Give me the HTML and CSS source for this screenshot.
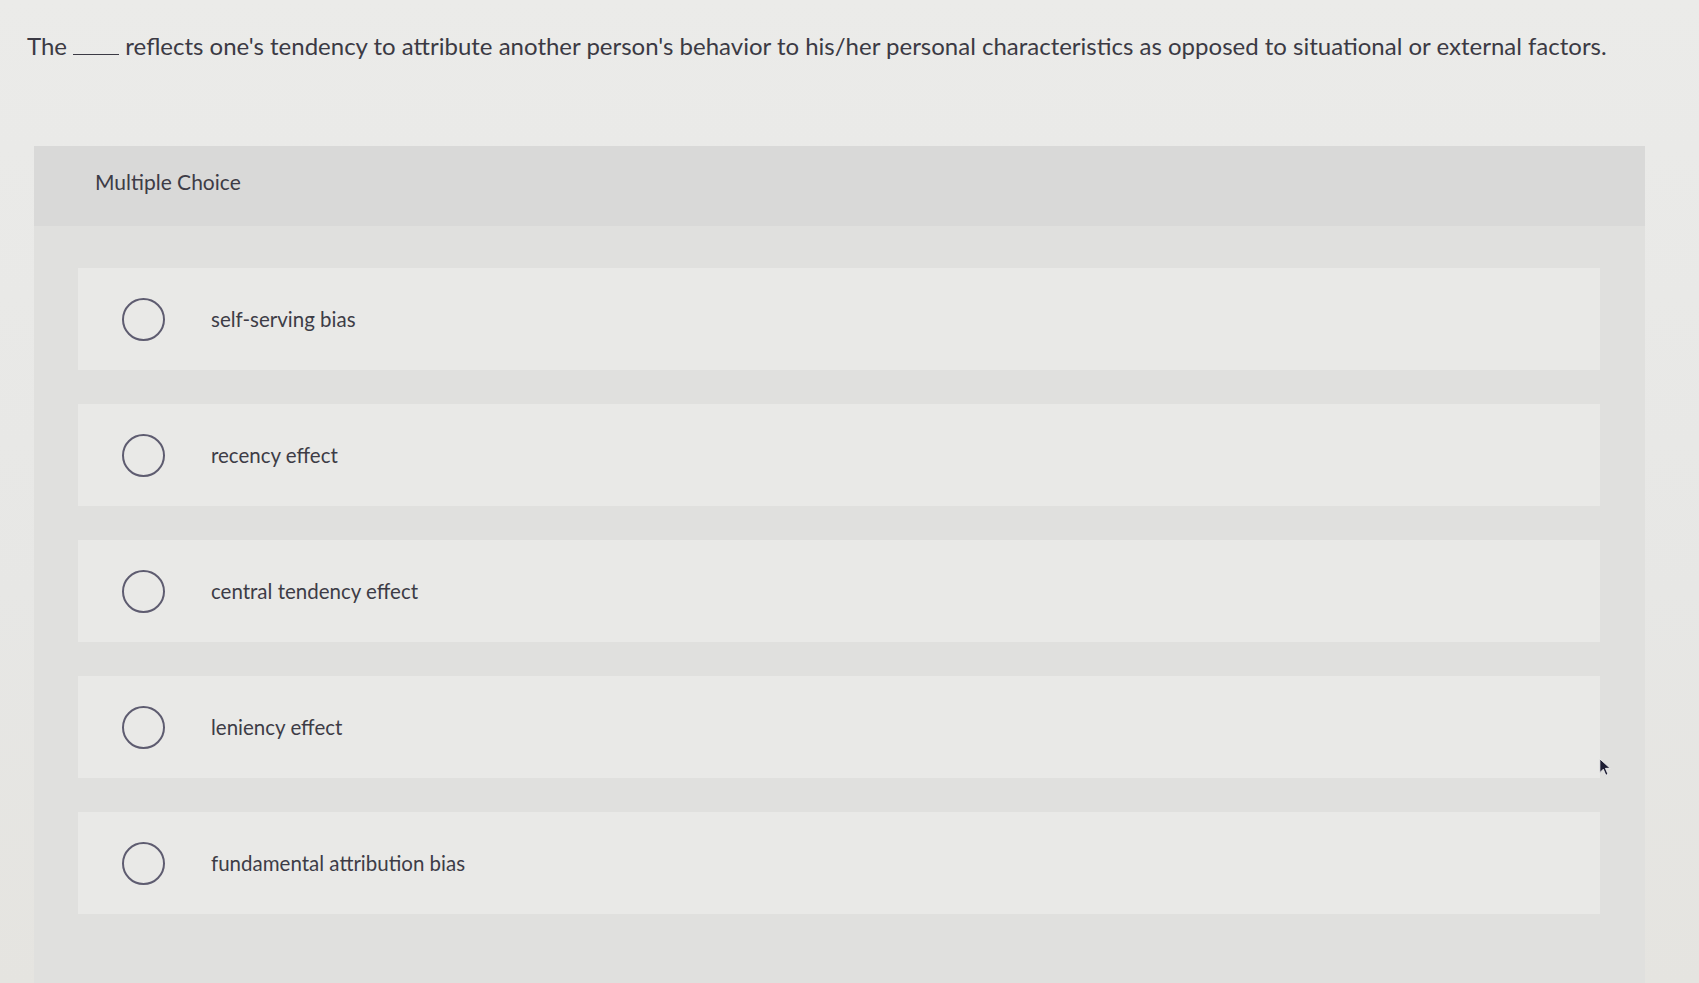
FILE: index.html
```html
<!DOCTYPE html>
<html>
<head>
<meta charset="utf-8">
<link rel="stylesheet" href="styles.css">
</head>
<body>
<div class="page">
  <p class="question">The <span class="blank"></span> reflects one's tendency to attribute another person's behavior to his/her personal characteristics as opposed to situational or external factors.</p>
  <section class="card">
    <header class="card-head">Multiple Choice</header>
    <div class="options">
      <label class="option"><span class="radio"></span><span class="opt-text">self-serving bias</span></label>
      <label class="option"><span class="radio"></span><span class="opt-text">recency effect</span></label>
      <label class="option"><span class="radio"></span><span class="opt-text">central tendency effect</span></label>
      <label class="option"><span class="radio"></span><span class="opt-text">leniency effect</span></label>
      <label class="option"><span class="radio"></span><span class="opt-text">fundamental attribution bias</span></label>
    </div>
  </section>
  <svg class="cursor" width="12" height="19" viewBox="0 0 14 22"><path d="M1 1 L1 17 L5 13 L8 20 L10.5 19 L7.5 12 L13 12 Z" fill="#1d1d33" stroke="#f2f2f2" stroke-width="1"/></svg>
</div>
</body>
</html>
```
FILE: styles.css
```css
html, body {
  margin: 0;
  padding: 0;
}
body {
  background: #e8e8e6;
  font-family: Lato, "Open Sans", "Liberation Sans", sans-serif;
  color: #3b3a44;
  overflow: hidden;
}
.page {
  position: relative;
  width: 1699px;
  height: 983px;
  overflow: hidden;
  background: linear-gradient(180deg, #ebebe9 0%, #e7e7e5 60%, #e5e4e0 100%);
}
.question {
  margin: 0;
  padding: 31px 0 0 27px;
  font-size: 24px;
  line-height: 30px;
  white-space: nowrap;
}
.blank {
  display: inline-block;
  width: 46px;
  border-bottom: 1.5px solid #3b3a44;
  vertical-align: baseline;
}
.card {
  margin: 85px 0 0 34px;
  width: 1611px;
  height: 900px;
  background: #e0e0de;
}
.card-head {
  height: 80px;
  box-sizing: border-box;
  padding: 22px 0 0 61px;
  background: #d9d9d8;
  font-size: 21px;
  line-height: 28px;
  color: #3d3c46;
}
.options {
  display: flex;
  flex-direction: column;
  gap: 34px;
  padding: 42px 45px 0 44px;
}
.option {
  display: flex;
  align-items: center;
  height: 102px;
  padding-left: 44px;
  background: #e9e9e7;
  font-size: 20.5px;
  color: #3d3c46;
}
.radio {
  width: 39px;
  height: 39px;
  border: 2px solid #5e5c70;
  border-radius: 50%;
  flex: none;
}
.opt-text {
  margin-left: 46px;
}
.cursor {
  position: absolute;
  left: 1599px;
  top: 758px;
}
```
